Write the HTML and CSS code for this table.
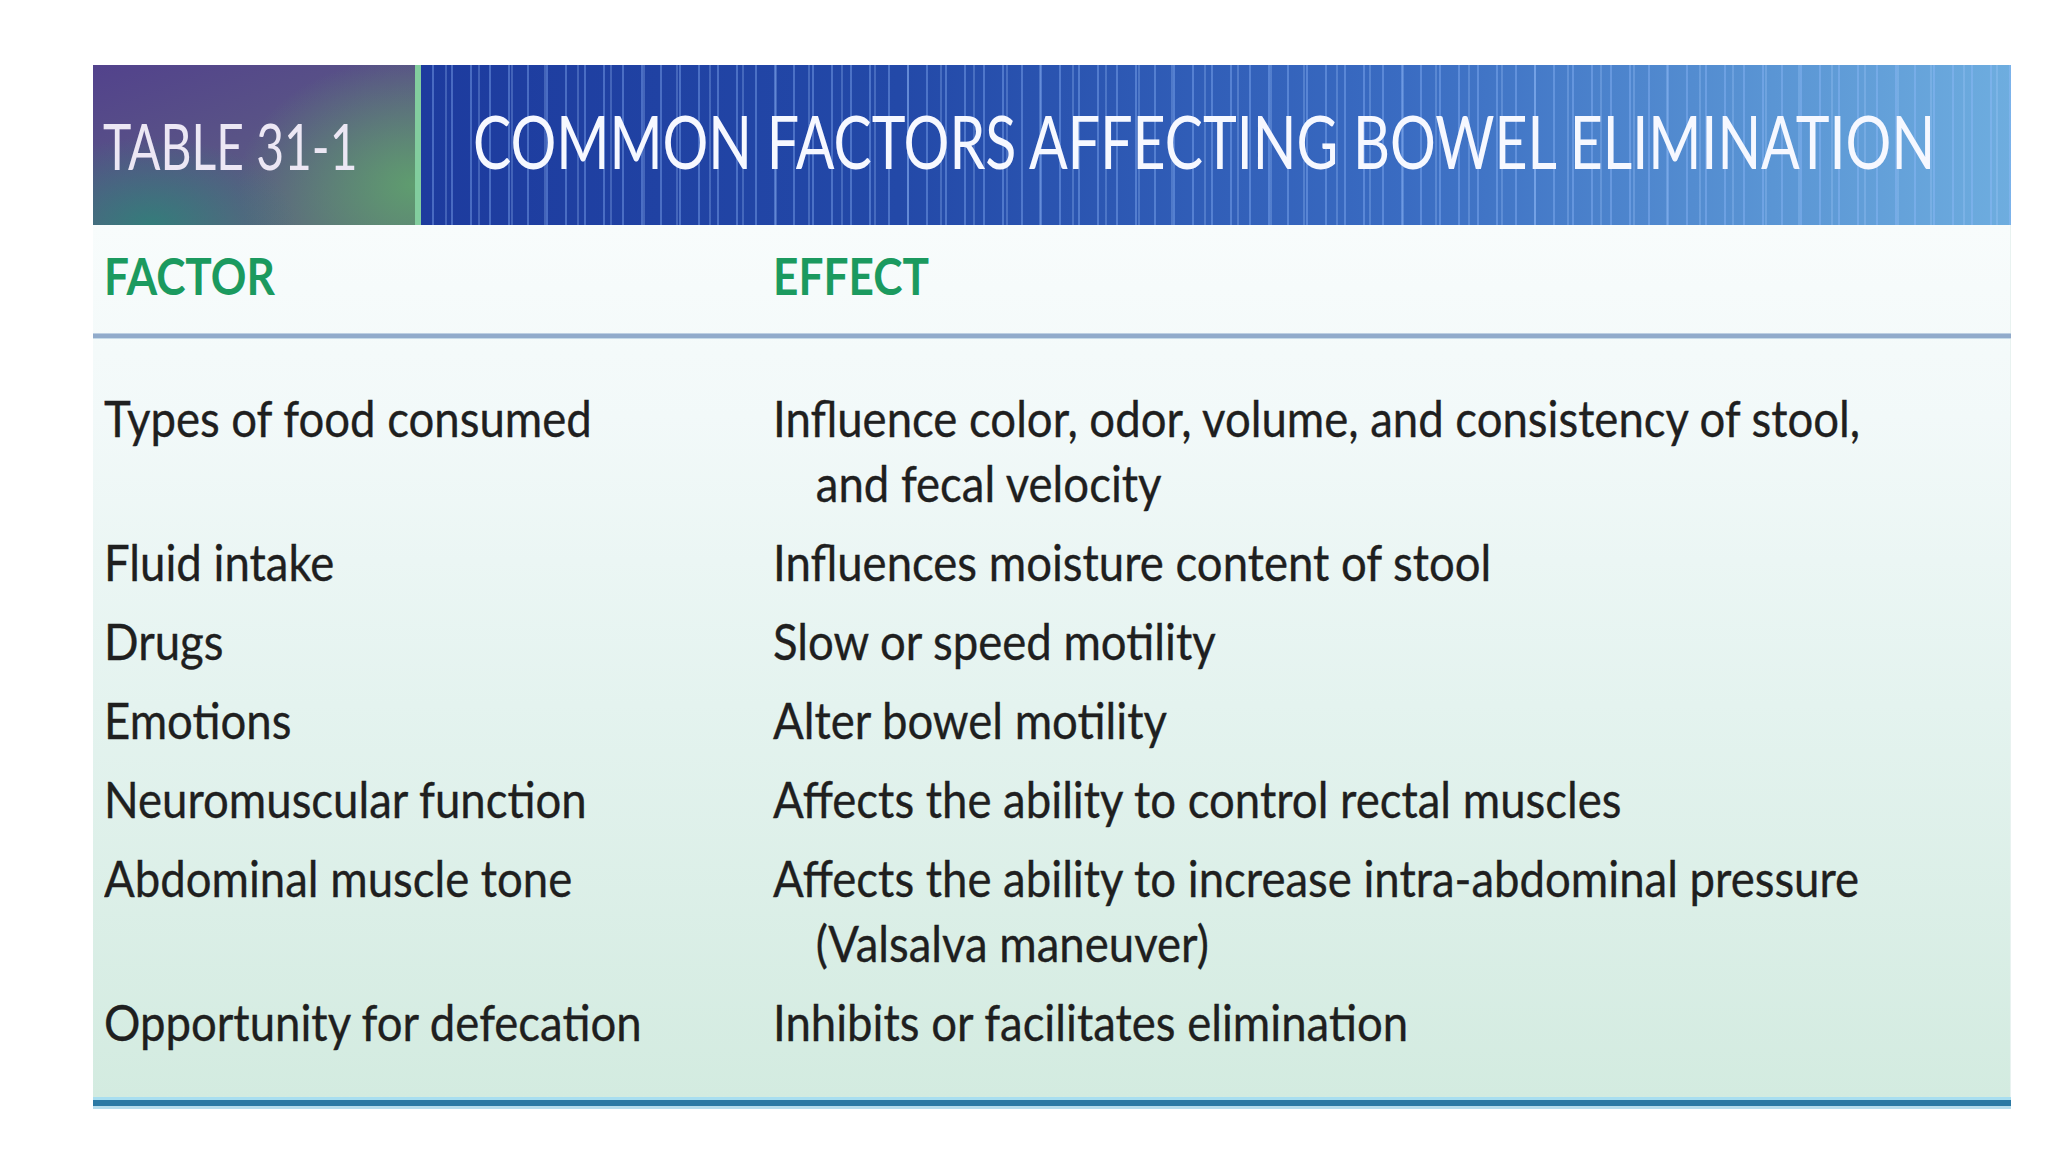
FILE: index.html
```html
<!DOCTYPE html>
<html lang="en">
<head>
<meta charset="utf-8">
<title>Table 31-1 Common Factors Affecting Bowel Elimination</title>
<link rel="stylesheet" href="styles.css">
</head>
<body>
<div class="doc">
  <div class="banner">
    <div class="label"><span class="cond">TABLE 31-1</span></div>
    <div class="sep"></div>
    <div class="title"><span class="cond">COMMON FACTORS AFFECTING BOWEL ELIMINATION</span></div>
  </div>
  <div class="panel">
    <div class="thead">
      <div class="th"><span class="cond">FACTOR</span></div>
      <div class="th"><span class="cond">EFFECT</span></div>
    </div>
    <div class="rule-top"></div>
    <div class="rows">
      <div class="row">
        <div class="factor">Types of food consumed</div>
        <div class="effect">Influence color, odor, volume, and consistency of stool,<br>and fecal velocity</div>
      </div>
      <div class="row">
        <div class="factor">Fluid intake</div>
        <div class="effect">Influences moisture content of stool</div>
      </div>
      <div class="row">
        <div class="factor">Drugs</div>
        <div class="effect">Slow or speed motility</div>
      </div>
      <div class="row">
        <div class="factor">Emotions</div>
        <div class="effect">Alter bowel motility</div>
      </div>
      <div class="row">
        <div class="factor">Neuromuscular function</div>
        <div class="effect">Affects the ability to control rectal muscles</div>
      </div>
      <div class="row">
        <div class="factor">Abdominal muscle tone</div>
        <div class="effect">Affects the ability to increase intra-abdominal pressure<br>(Valsalva maneuver)</div>
      </div>
      <div class="row">
        <div class="factor">Opportunity for defecation</div>
        <div class="effect">Inhibits or facilitates elimination</div>
      </div>
    </div>
  </div>
  <div class="rule-bottom"></div>
</div>
</body>
</html>
```

FILE: styles.css
```css
html, body {
  margin: 0;
  padding: 0;
  background: #ffffff;
}

body {
  font-family: Lato, "Open Sans", "Liberation Sans", sans-serif;
  color: #1f1f1f;
}

.doc {
  margin: 65px 0 0 93px;
  width: 1918px;
}

.cond {
  display: inline-block;
  white-space: nowrap;
  transform-origin: left center;
}

/* ---------- banner ---------- */
.banner {
  display: flex;
  height: 160px;
}

.label {
  width: 322px;
  box-sizing: border-box;
  padding-left: 10px;
  display: flex;
  align-items: center;
  overflow: hidden;
  color: #ece7f4;
  font-size: 64px;
  background:
    radial-gradient(ellipse 45% 55% at 18% 100%, rgba(40, 135, 120, 0.75), rgba(40, 135, 120, 0) 100%),
    radial-gradient(ellipse 55% 80% at 100% 75%, rgba(95, 160, 110, 0.95), rgba(95, 160, 110, 0) 100%),
    linear-gradient(160deg, #52428c 0%, #595386 45%, #5d6a7c 100%);
}

.label .cond {
  transform: scaleX(0.75);
}

.sep {
  width: 6px;
  background: #82cd9e;
}

.title {
  flex: 1;
  display: flex;
  align-items: center;
  overflow: hidden;
  padding-left: 52px;
  padding-bottom: 8px;
  color: #f6f8ff;
  font-size: 73px;
  background:
    repeating-linear-gradient(90deg, rgba(0, 0, 0, 0) 0 11px, rgba(150, 190, 255, 0.36) 11px 13px, rgba(0, 0, 0, 0) 13px 19px),
    repeating-linear-gradient(90deg, rgba(0, 0, 0, 0) 0 24px, rgba(170, 205, 255, 0.26) 24px 26px, rgba(0, 0, 0, 0) 26px 33px),
    linear-gradient(90deg, #1d3b9e 0%, #2349a8 30%, #3a6cc2 62%, #5a95d4 85%, #6eaddf 100%);
}

.title .cond {
  transform: scaleX(0.784);
}

/* ---------- panel ---------- */
.panel {
  background: linear-gradient(180deg, #f8fcfc 0%, #f2f9f9 22%, #e4f3ef 55%, #d3ebe0 100%);
  box-shadow: inset -1px 0 0 #e8f2f0;
}

.thead {
  display: grid;
  grid-template-columns: 669px 1fr;
  padding: 20px 0 28px 11px;
  font-size: 52px;
  line-height: 60px;
  font-weight: 700;
  color: #1b9a5f;
}

.thead .cond {
  transform: scaleX(0.85);
}

.rule-top {
  height: 6px;
  background: linear-gradient(180deg, #bccfe2 0 1px, #91abcb 1px 5px, #c6dbe9 5px 6px);
}

.rows {
  display: flex;
  flex-direction: column;
  gap: 14px;
  padding: 47px 0 42px 11px;
}

.row {
  display: grid;
  grid-template-columns: 669px 1fr;
  font-size: 50px;
  line-height: 65px;
  white-space: nowrap;
  overflow: hidden;
  -webkit-text-stroke: 0.35px #1f1f1f;
}

.factor,
.effect {
  transform: scaleX(0.91);
  transform-origin: left top;
}

.effect {
  padding-left: 47px;
  text-indent: -47px;
}

.rule-bottom {
  height: 12px;
  background: linear-gradient(180deg, #a8def0 0 3px, #2c79a4 3px 9px, #b6dcec 9px 12px);
}
```
